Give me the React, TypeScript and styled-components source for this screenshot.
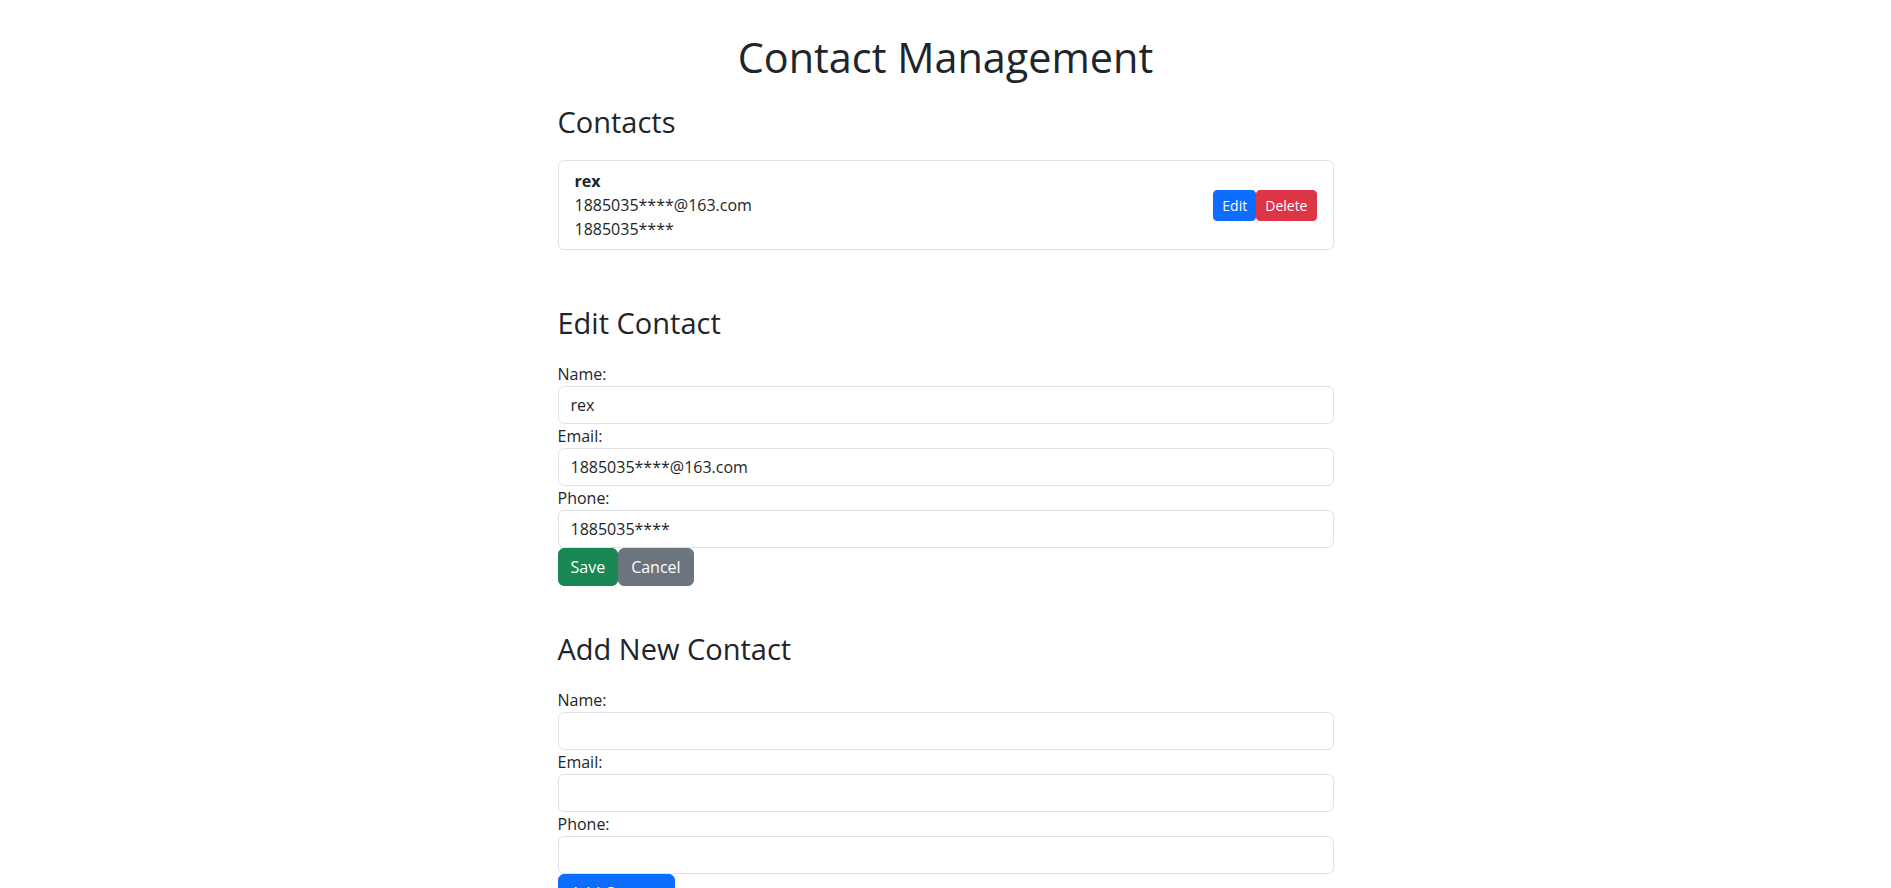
import { FormEvent, useState } from 'react';
import styled, { createGlobalStyle, css } from 'styled-components';

type Contact = {
  id: number;
  name: string;
  email: string;
  phone: string;
};

type Variant = 'primary' | 'danger' | 'success' | 'secondary';

const COLORS: Record<Variant, string> = {
  primary: '#0d6efd',
  danger: '#dc3545',
  success: '#198754',
  secondary: '#6c757d',
};

const emptyForm = { name: '', email: '', phone: '' };

export default function App() {
  const [contacts, setContacts] = useState<Contact[]>([
    { id: 1, name: 'rex', email: '1885035****@163.com', phone: '1885035****' },
  ]);
  const [editing, setEditing] = useState<Contact | null>(contacts[0]);
  const [draft, setDraft] = useState(emptyForm);

  const onSave = (e: FormEvent) => {
    e.preventDefault();
    if (!editing) return;
    setContacts(contacts.map((c) => (c.id === editing.id ? editing : c)));
    setEditing(null);
  };

  const onAdd = (e: FormEvent) => {
    e.preventDefault();
    if (!draft.name) return;
    setContacts([...contacts, { id: Date.now(), ...draft }]);
    setDraft(emptyForm);
  };

  return (
    <>
      <GlobalStyle />
      <Page>
        <Title>Contact Management</Title>
        <ContactsSection>
          <SectionTitle>Contacts</SectionTitle>
          <ContactList>
            {contacts.map((contact) => (
              <ContactItem key={contact.id}>
                <ContactInfo>
                  <ContactName>{contact.name}</ContactName>
                  <span>{contact.email}</span>
                  <span>{contact.phone}</span>
                </ContactInfo>
                <Actions>
                  <Button
                    $variant="primary"
                    $small
                    onClick={() => setEditing(contact)}
                  >
                    Edit
                  </Button>
                  <Button
                    $variant="danger"
                    $small
                    onClick={() =>
                      setContacts(contacts.filter((c) => c.id !== contact.id))
                    }
                  >
                    Delete
                  </Button>
                </Actions>
              </ContactItem>
            ))}
          </ContactList>
        </ContactsSection>

        {editing && (
          <Section>
            <SectionTitle>Edit Contact</SectionTitle>
            <Form onSubmit={onSave}>
              <Label>Name:</Label>
              <Input
                value={editing.name}
                onChange={(e) => setEditing({ ...editing, name: e.target.value })}
              />
              <Label>Email:</Label>
              <Input
                value={editing.email}
                onChange={(e) =>
                  setEditing({ ...editing, email: e.target.value })
                }
              />
              <Label>Phone:</Label>
              <Input
                value={editing.phone}
                onChange={(e) =>
                  setEditing({ ...editing, phone: e.target.value })
                }
              />
              <ButtonRow>
                <Button type="submit" $variant="success">
                  Save
                </Button>
                <Button
                  type="button"
                  $variant="secondary"
                  onClick={() => setEditing(null)}
                >
                  Cancel
                </Button>
              </ButtonRow>
            </Form>
          </Section>
        )}

        <Section>
          <SectionTitle>Add New Contact</SectionTitle>
          <Form onSubmit={onAdd}>
            <Label>Name:</Label>
            <Input
              value={draft.name}
              onChange={(e) => setDraft({ ...draft, name: e.target.value })}
            />
            <Label>Email:</Label>
            <Input
              value={draft.email}
              onChange={(e) => setDraft({ ...draft, email: e.target.value })}
            />
            <Label>Phone:</Label>
            <Input
              value={draft.phone}
              onChange={(e) => setDraft({ ...draft, phone: e.target.value })}
            />
            <ButtonRow>
              <Button type="submit" $variant="primary">
                Add Contact
              </Button>
            </ButtonRow>
          </Form>
        </Section>
      </Page>
    </>
  );
}

const GlobalStyle = createGlobalStyle`
  html {
    scrollbar-width: none;
  }
  *, *::before, *::after {
    box-sizing: border-box;
  }
  body {
    margin: 0;
    background: #fff;
    color: #212529;
    font-family: 'Open Sans', 'Noto Sans', sans-serif;
    font-size: 16px;
    line-height: 1.5;
  }
`;

const Page = styled.main`
  max-width: 800px;
  margin: 0 auto;
  padding: 33px 12px 24px;
  display: flex;
  flex-direction: column;
  gap: 46px;
`;

const Title = styled.h1`
  margin: 0 0 -24px;
  text-align: center;
  font-size: 41.4px;
  font-weight: 400;
  line-height: 1.2;
`;

const Section = styled.section``;

const ContactsSection = styled(Section)`
  padding-bottom: 10px;
`;

const SectionTitle = styled.h2`
  margin: 0 0 21px;
  font-size: 29px;
  font-weight: 400;
  line-height: 1.2;
`;

const ContactList = styled.ul`
  margin: 0;
  padding: 0;
  list-style: none;
  border: 1px solid #dee2e6;
  border-radius: 6px;
`;

const ContactItem = styled.li`
  display: flex;
  justify-content: space-between;
  align-items: center;
  padding: 8px 16px;
`;

const ContactInfo = styled.div`
  display: flex;
  flex-direction: column;
  line-height: 24px;
`;

const ContactName = styled.strong`
  font-weight: 700;
`;

const Actions = styled.div`
  display: flex;
`;

const Button = styled.button<{ $variant: Variant; $small?: boolean }>`
  padding: 6px 12px;
  border: 1px solid ${({ $variant }) => COLORS[$variant]};
  border-radius: 6px;
  background: ${({ $variant }) => COLORS[$variant]};
  color: #fff;
  font-family: inherit;
  font-size: 16px;
  line-height: 24px;
  cursor: pointer;
  ${({ $small }) =>
    $small &&
    css`
      padding: 4px 8px;
      border-radius: 4px;
      font-size: 14px;
      line-height: 21px;
    `}
`;

const Form = styled.form`
  display: flex;
  flex-direction: column;
`;

const Label = styled.label`
  font-size: 16px;
  line-height: 24px;
`;

const Input = styled.input`
  display: block;
  width: 100%;
  padding: 6px 12px;
  border: 1px solid #dee2e6;
  border-radius: 6px;
  background: #fff;
  color: #212529;
  font-family: inherit;
  font-size: 16px;
  line-height: 24px;
  outline: none;
`;

const ButtonRow = styled.div`
  display: flex;
`;
